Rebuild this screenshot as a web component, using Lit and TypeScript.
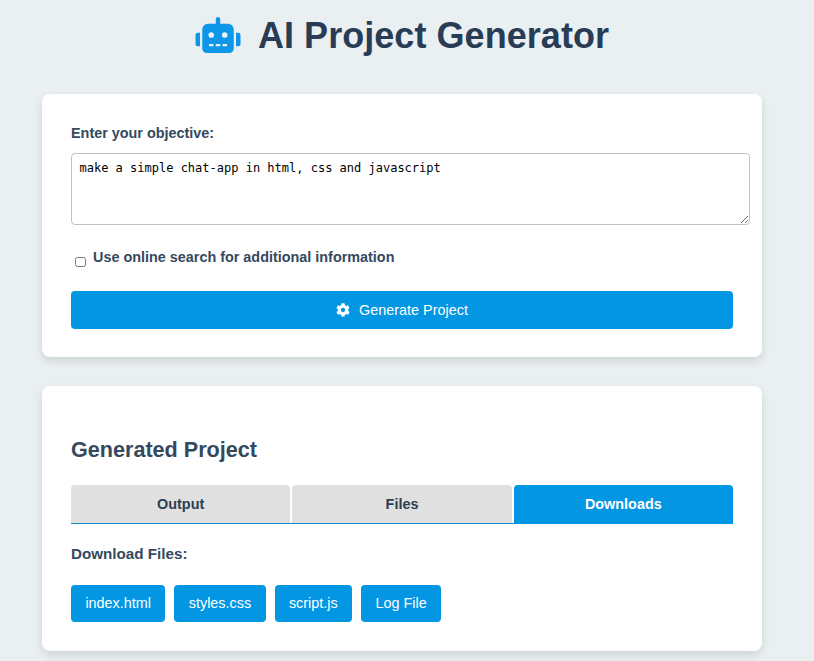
import { LitElement, html, css } from "lit";
import { customElement } from "lit/decorators.js";

const ROBOT = "M32,224H64V416H32A31.96166,31.96166,0,0,1,0,384V256A31.96166,31.96166,0,0,1,32,224Zm512-48V448a64.06328,64.06328,0,0,1-64,64H160a64.06328,64.06328,0,0,1-64-64V176a79.974,79.974,0,0,1,80-80H288V32a32,32,0,0,1,64,0V96H464A79.974,79.974,0,0,1,544,176ZM264,256a40,40,0,1,0-40,40A39.997,39.997,0,0,0,264,256Zm-8,128H192v32h64Zm96,0H288v32h64ZM456,256a40,40,0,1,0-40,40A39.997,39.997,0,0,0,456,256Zm-8,128H384v32h64ZM640,256V384a31.96166,31.96166,0,0,1-32,32H576V224h32A31.96166,31.96166,0,0,1,640,256Z";
const COG = "M487.4 315.7l-42.6-24.6c4.3-23.2 4.3-47 0-70.2l42.6-24.6c4.9-2.8 7.1-8.6 5.5-14-11.1-35.6-30-67.8-54.7-94.6-3.8-4.1-10-5.1-14.8-2.3L380.8 110c-17.9-15.4-38.5-27.3-60.8-35.1V25.8c0-5.6-3.9-10.5-9.4-11.7-36.7-8.2-74.3-7.8-109.2 0-5.5 1.2-9.4 6.1-9.4 11.7V75c-22.2 7.9-42.8 19.8-60.8 35.1L88.7 85.5c-4.9-2.8-11-1.9-14.8 2.3-24.7 26.7-43.6 58.9-54.7 94.6-1.7 5.4.6 11.2 5.5 14L67.3 221c-4.3 23.2-4.3 47 0 70.2l-42.6 24.6c-4.9 2.8-7.1 8.6-5.5 14 11.1 35.6 30 67.8 54.7 94.6 3.8 4.1 10 5.1 14.8 2.3l42.6-24.6c17.9 15.4 38.5 27.3 60.8 35.1v49.2c0 5.6 3.9 10.5 9.4 11.7 36.7 8.2 74.3 7.8 109.2 0 5.5-1.2 9.4-6.1 9.4-11.7v-49.2c22.2-7.9 42.8-19.8 60.8-35.1l42.6 24.6c4.9 2.8 11 1.9 14.8-2.3 24.7-26.7 43.6-58.9 54.7-94.6 1.5-5.5-.7-11.3-5.6-14.1zM256 336c-44.1 0-80-35.9-80-80s35.9-80 80-80 80 35.9 80 80-35.9 80-80 80z";

@customElement("app-root")
export class AppRoot extends LitElement {
  static styles = css`
    :host {
      display: block;
      height: 661px;
      overflow: hidden;
      box-sizing: border-box;
      padding-right: 10px;
      background: #eaeff2;
      color: #2c3e50;
      font-family: "Liberation Sans", Arial, sans-serif;
    }
    .container {
      width: 720px;
      margin: 0 auto;
    }
    .title {
      display: flex;
      align-items: center;
      justify-content: center;
      gap: 17px;
      height: 94px;
      padding-bottom: 22px;
      box-sizing: border-box;
      margin: 0;
      font-size: 36px;
      font-weight: 700;
      line-height: 70px;
      letter-spacing: 0.05px;
      color: #283d55;
    }
    .title svg {
      width: 46px;
      height: 36px;
      margin-bottom: 2px;
      fill: #0e96e8;
    }
    .card {
      background: #fff;
      border-radius: 8px;
      box-shadow: 0 4px 10px rgba(0, 0, 0, 0.12);
      padding: 29px 29px 28px;
    }
    .card + .card {
      margin-top: 29px;
      padding-bottom: 29px;
    }
    .label {
      display: block;
      font-size: 14.4px;
      font-weight: 700;
      line-height: 20px;
      color: #34495e;
      margin-bottom: 10px;
    }
    textarea {
      display: block;
      box-sizing: content-box;
      width: 662px;
      height: 55px;
      padding: 7px 7.5px 8px;
      border: 1px solid #bdc3c7;
      border-radius: 4px;
      margin: 0;
      font-family: "DejaVu Sans Mono", monospace;
      font-size: 12px;
      line-height: 14px;
      color: #000;
      outline: none;
    }
    .check {
      display: flex;
      align-items: flex-start;
      margin: 22px 0 21px;
      height: 23px;
      font-size: 14.4px;
      font-weight: 700;
      line-height: 20px;
      color: #34495e;
    }
    .check input {
      appearance: none;
      width: 11px;
      height: 10px;
      box-sizing: border-box;
      border: 1px solid #767676;
      border-radius: 2.5px;
      background: #fff;
      margin: 10px 7px 0 4px;
    }
    .generate {
      display: flex;
      align-items: center;
      justify-content: center;
      gap: 9px;
      width: 100%;
      height: 38px;
      border: none;
      border-radius: 4px;
      background: #0396e3;
      color: #fff;
      font: 14.4px "Liberation Sans", Arial, sans-serif;
    }
    .generate svg {
      width: 14px;
      height: 14px;
      fill: #fff;
    }
    h2 {
      margin: 21px 0 21px;
      font-size: 21.6px;
      line-height: 28px;
      font-weight: 700;
      color: #34495e;
    }
    .tabs {
      display: flex;
      align-items: flex-start;
      gap: 2px;
      height: 39px;
      box-sizing: border-box;
      border-bottom: 1px solid #0f8dd0;
    }
    .tab {
      flex: 1;
      height: 38px;
      box-sizing: border-box;
      display: flex;
      align-items: center;
      justify-content: center;
      background: #e0e0e0;
      border-radius: 4px 4px 0 0;
      font-size: 14.4px;
      font-weight: 700;
      color: #2c3e50;
    }
    .tab.active {
      height: 39px;
      padding-bottom: 1px;
      background: #0396e3;
      color: #fff;
    }
    h3 {
      margin: 20px 0 21px;
      font-size: 15.2px;
      line-height: 20px;
      font-weight: 700;
      color: #34495e;
    }
    .files {
      display: flex;
      gap: 9px;
    }
    .file {
      display: flex;
      align-items: center;
      height: 37px;
      box-sizing: border-box;
      padding: 0 14.4px 1px;
      background: #0396e3;
      border-radius: 4px;
      color: #fff;
      font-size: 14.4px;
    }
  `;

  render() {
    return html`
      <div class="container">
        <h1 class="title">
          <svg viewBox="0 0 640 512" aria-hidden="true"><path d=${ROBOT}></path></svg>
          AI Project Generator
        </h1>
        <section class="card">
          <label class="label">Enter your objective:</label>
          <textarea .value=${"make a simple chat-app in html, css and javascript"}></textarea>
          <label class="check"><input type="checkbox" />Use online search for additional information</label>
          <button class="generate">
            <svg viewBox="0 0 512 512" aria-hidden="true"><path d=${COG}></path></svg>
            Generate Project
          </button>
        </section>
        <section class="card">
          <h2>Generated Project</h2>
          <div class="tabs">
            <div class="tab">Output</div>
            <div class="tab">Files</div>
            <div class="tab active">Downloads</div>
          </div>
          <h3>Download Files:</h3>
          <div class="files">
            <div class="file">index.html</div>
            <div class="file">styles.css</div>
            <div class="file">script.js</div>
            <div class="file">Log File</div>
          </div>
        </section>
      </div>
    `;
  }
}
